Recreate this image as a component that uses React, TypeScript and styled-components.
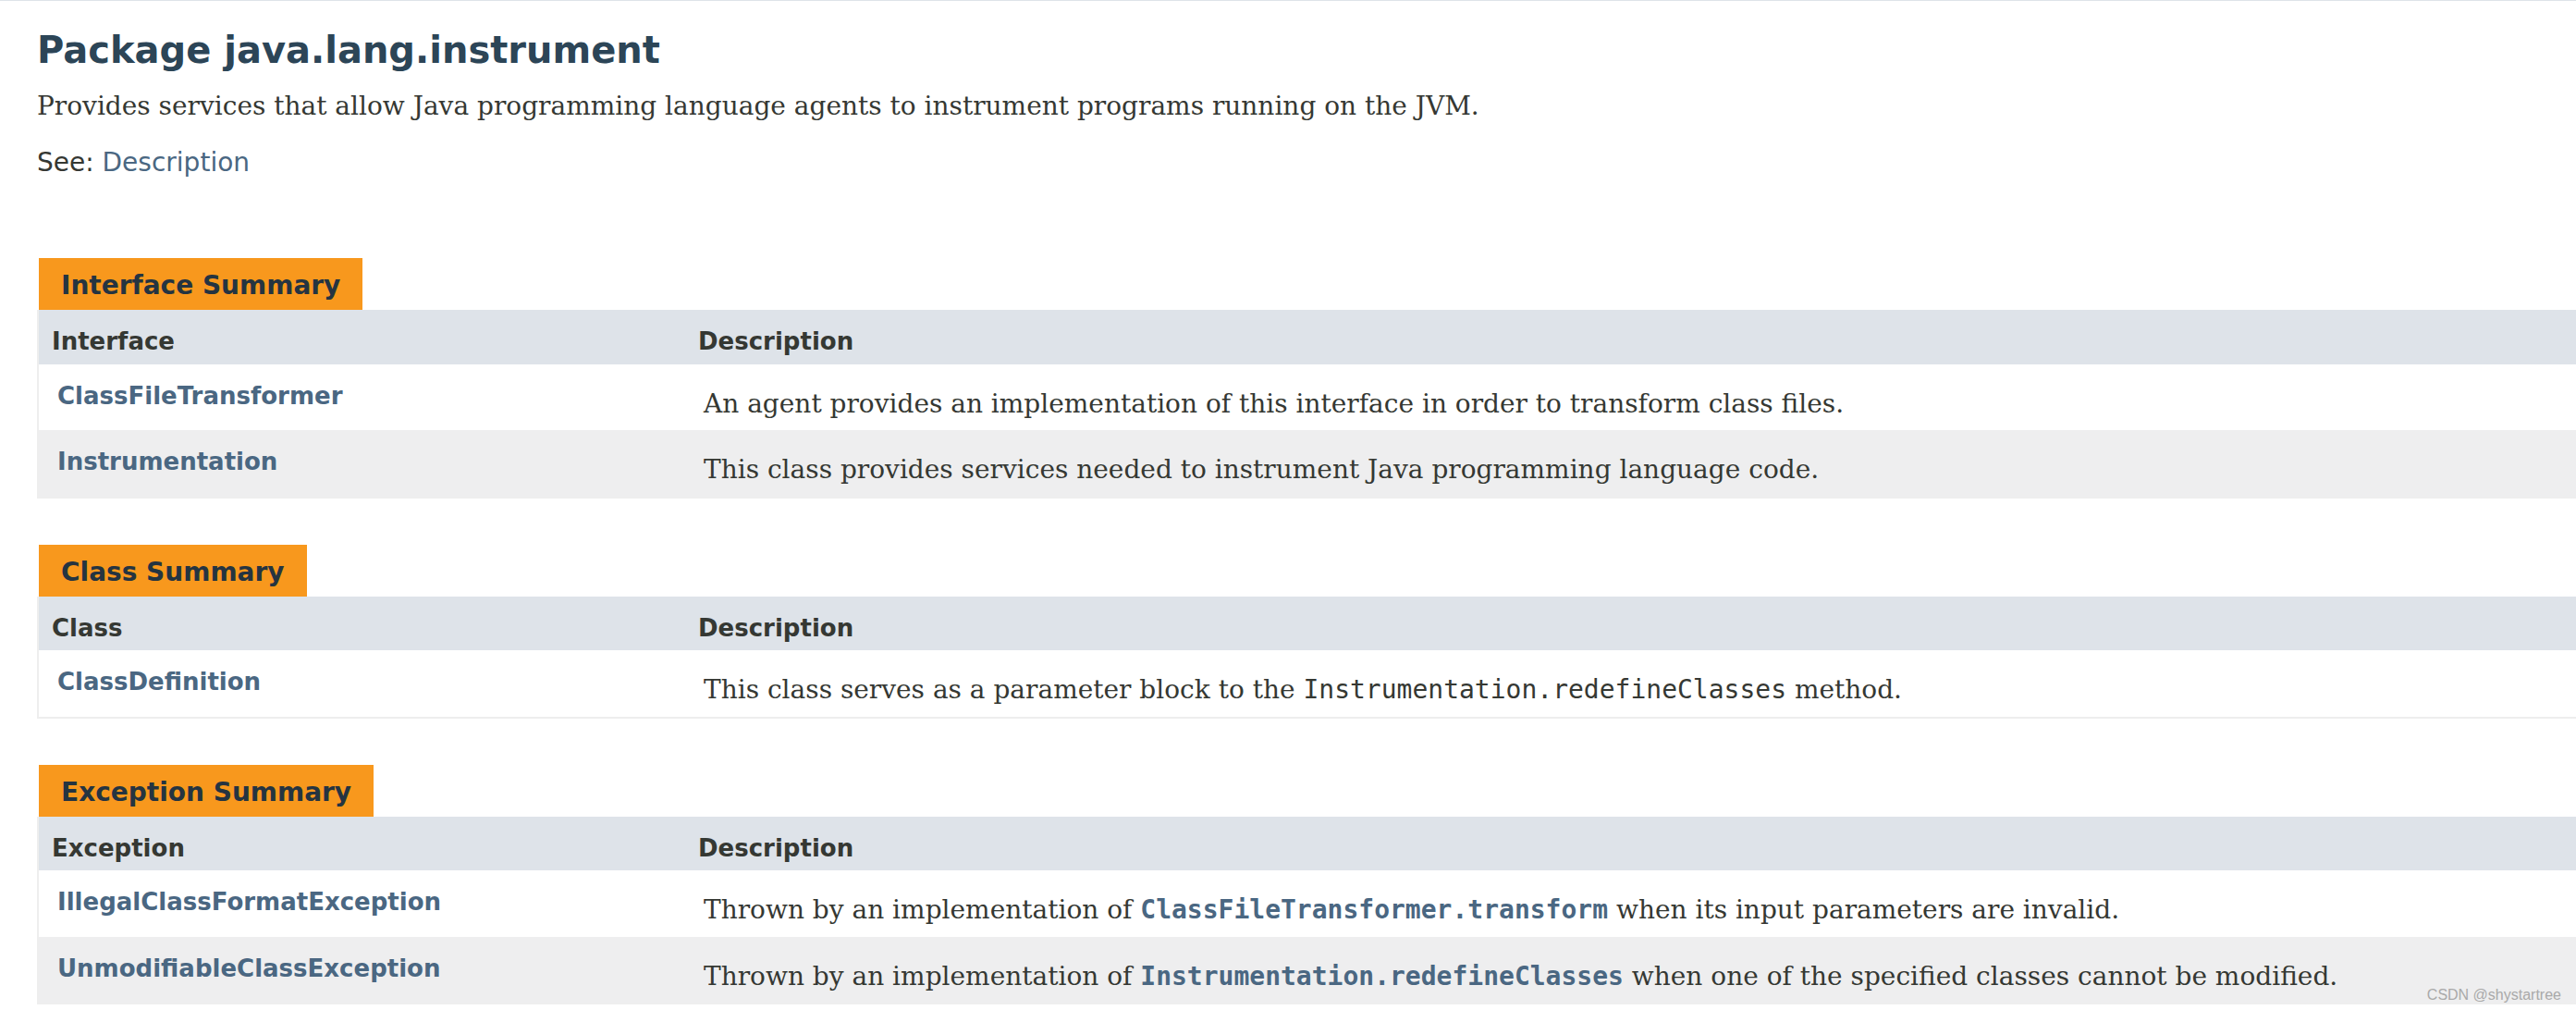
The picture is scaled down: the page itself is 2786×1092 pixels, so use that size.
import React from "react";
import styled, { createGlobalStyle } from "styled-components";

const GlobalStyle = createGlobalStyle`
  html, body {
    margin: 0;
    padding: 0;
    background: #ffffff;
    overflow: hidden;
  }
  body {
    font-family: "DejaVu Sans", "Liberation Sans", Arial, sans-serif;
    font-size: 28px;
    color: #353833;
  }
`;

const Page = styled.div`
  position: relative;
  border-top: 1px solid #dee3e9;
  padding: 29px 0 0 40px;
  min-height: 1091px;
  box-sizing: border-box;
`;

const Title = styled.h1`
  margin: 0;
  font-family: "DejaVu Sans", "Liberation Sans", sans-serif;
  font-size: 40px;
  line-height: 48px;
  font-weight: bold;
  color: #2c4557;
`;

const Summary = styled.div`
  margin-top: 17px;
  font-family: "DejaVu Serif", "Liberation Serif", serif;
  font-size: 28px;
  line-height: 40px;
  color: #353833;
`;

const SeeLine = styled.p`
  margin: 21px 0 0;
  font-size: 28px;
  line-height: 40px;
`;

const Link = styled.a`
  color: #4a6782;
  text-decoration: none;
`;

const Sections = styled.div`
  display: flex;
  flex-direction: column;
  gap: 50px;
  margin-top: 83px;
`;

const Section = styled.section`
  display: flex;
  flex-direction: column;
  align-items: flex-start;
`;

const Tab = styled.div`
  margin-left: 2px;
  padding: 10px 24px 6px;
  line-height: 40px;
  font-size: 28px;
  font-weight: bold;
  color: #253441;
  background: #f8981d;
  white-space: nowrap;
`;

const Table = styled.div`
  align-self: stretch;
  display: grid;
  grid-template-columns: 699px 1fr;
  border-left: 2px solid #eeeeee;
  border-bottom: 2px solid #eeeeee;
`;

const HeadCell = styled.div`
  background: #dee3e9;
  padding: 16px 6px 6.5px 14px;
  font-size: 26px;
  line-height: 36px;
  font-weight: bold;
  color: #353833;
`;

const NameCell = styled.div<{ $alt: boolean }>`
  background: ${(p) => (p.$alt ? "#eeeeef" : "#ffffff")};
  height: 71.5px;
  box-sizing: border-box;
  padding: 16px 6px 0 20px;
  font-size: 26px;
  line-height: 36px;
  font-weight: bold;
`;

const DescCell = styled.div<{ $alt: boolean }>`
  background: ${(p) => (p.$alt ? "#eeeeef" : "#ffffff")};
  height: 71.5px;
  box-sizing: border-box;
  padding: 23px 6px 0 20px;
  font-family: "DejaVu Serif", "Liberation Serif", serif;
  font-size: 28px;
  line-height: 40px;
  color: #353833;
  white-space: nowrap;
`;

const Code = styled.code`
  font-family: "DejaVu Sans Mono", "Liberation Mono", monospace;
  font-size: 28px;
`;

const CodeLink = styled.a`
  font-family: "DejaVu Sans Mono", "Liberation Mono", monospace;
  font-size: 28px;
  font-weight: bold;
  color: #4a6782;
  text-decoration: none;
`;

const Watermark = styled.div`
  position: absolute;
  right: 16px;
  bottom: 6px;
  font-family: "Liberation Sans", Arial, sans-serif;
  font-size: 16px;
  color: #a9a9a9;
`;

type Row = { name: string; desc: React.ReactNode };

const sections: { caption: string; kind: string; rows: Row[] }[] = [
  {
    caption: "Interface Summary",
    kind: "Interface",
    rows: [
      {
        name: "ClassFileTransformer",
        desc: "An agent provides an implementation of this interface in order to transform class files.",
      },
      {
        name: "Instrumentation",
        desc: "This class provides services needed to instrument Java programming language code.",
      },
    ],
  },
  {
    caption: "Class Summary",
    kind: "Class",
    rows: [
      {
        name: "ClassDefinition",
        desc: (
          <>
            This class serves as a parameter block to the <Code>Instrumentation.redefineClasses</Code> method.
          </>
        ),
      },
    ],
  },
  {
    caption: "Exception Summary",
    kind: "Exception",
    rows: [
      {
        name: "IllegalClassFormatException",
        desc: (
          <>
            Thrown by an implementation of <CodeLink href="#">ClassFileTransformer.transform</CodeLink> when its
            input parameters are invalid.
          </>
        ),
      },
      {
        name: "UnmodifiableClassException",
        desc: (
          <>
            Thrown by an implementation of <CodeLink href="#">Instrumentation.redefineClasses</CodeLink> when one of
            the specified classes cannot be modified.
          </>
        ),
      },
    ],
  },
];

export default function App() {
  return (
    <>
      <GlobalStyle />
      <Page>
        <Title>Package java.lang.instrument</Title>
        <Summary>
          Provides services that allow Java programming language agents to instrument programs running on the JVM.
        </Summary>
        <SeeLine>
          See: <Link href="#">Description</Link>
        </SeeLine>
        <Sections>
          {sections.map((s) => (
            <Section key={s.caption}>
              <Tab>{s.caption}</Tab>
              <Table>
                <HeadCell>{s.kind}</HeadCell>
                <HeadCell>Description</HeadCell>
                {s.rows.map((r, i) => (
                  <React.Fragment key={r.name}>
                    <NameCell $alt={i % 2 === 1}>
                      <Link href="#">{r.name}</Link>
                    </NameCell>
                    <DescCell $alt={i % 2 === 1}>{r.desc}</DescCell>
                  </React.Fragment>
                ))}
              </Table>
            </Section>
          ))}
        </Sections>
        <Watermark>CSDN @shystartree</Watermark>
      </Page>
    </>
  );
}
